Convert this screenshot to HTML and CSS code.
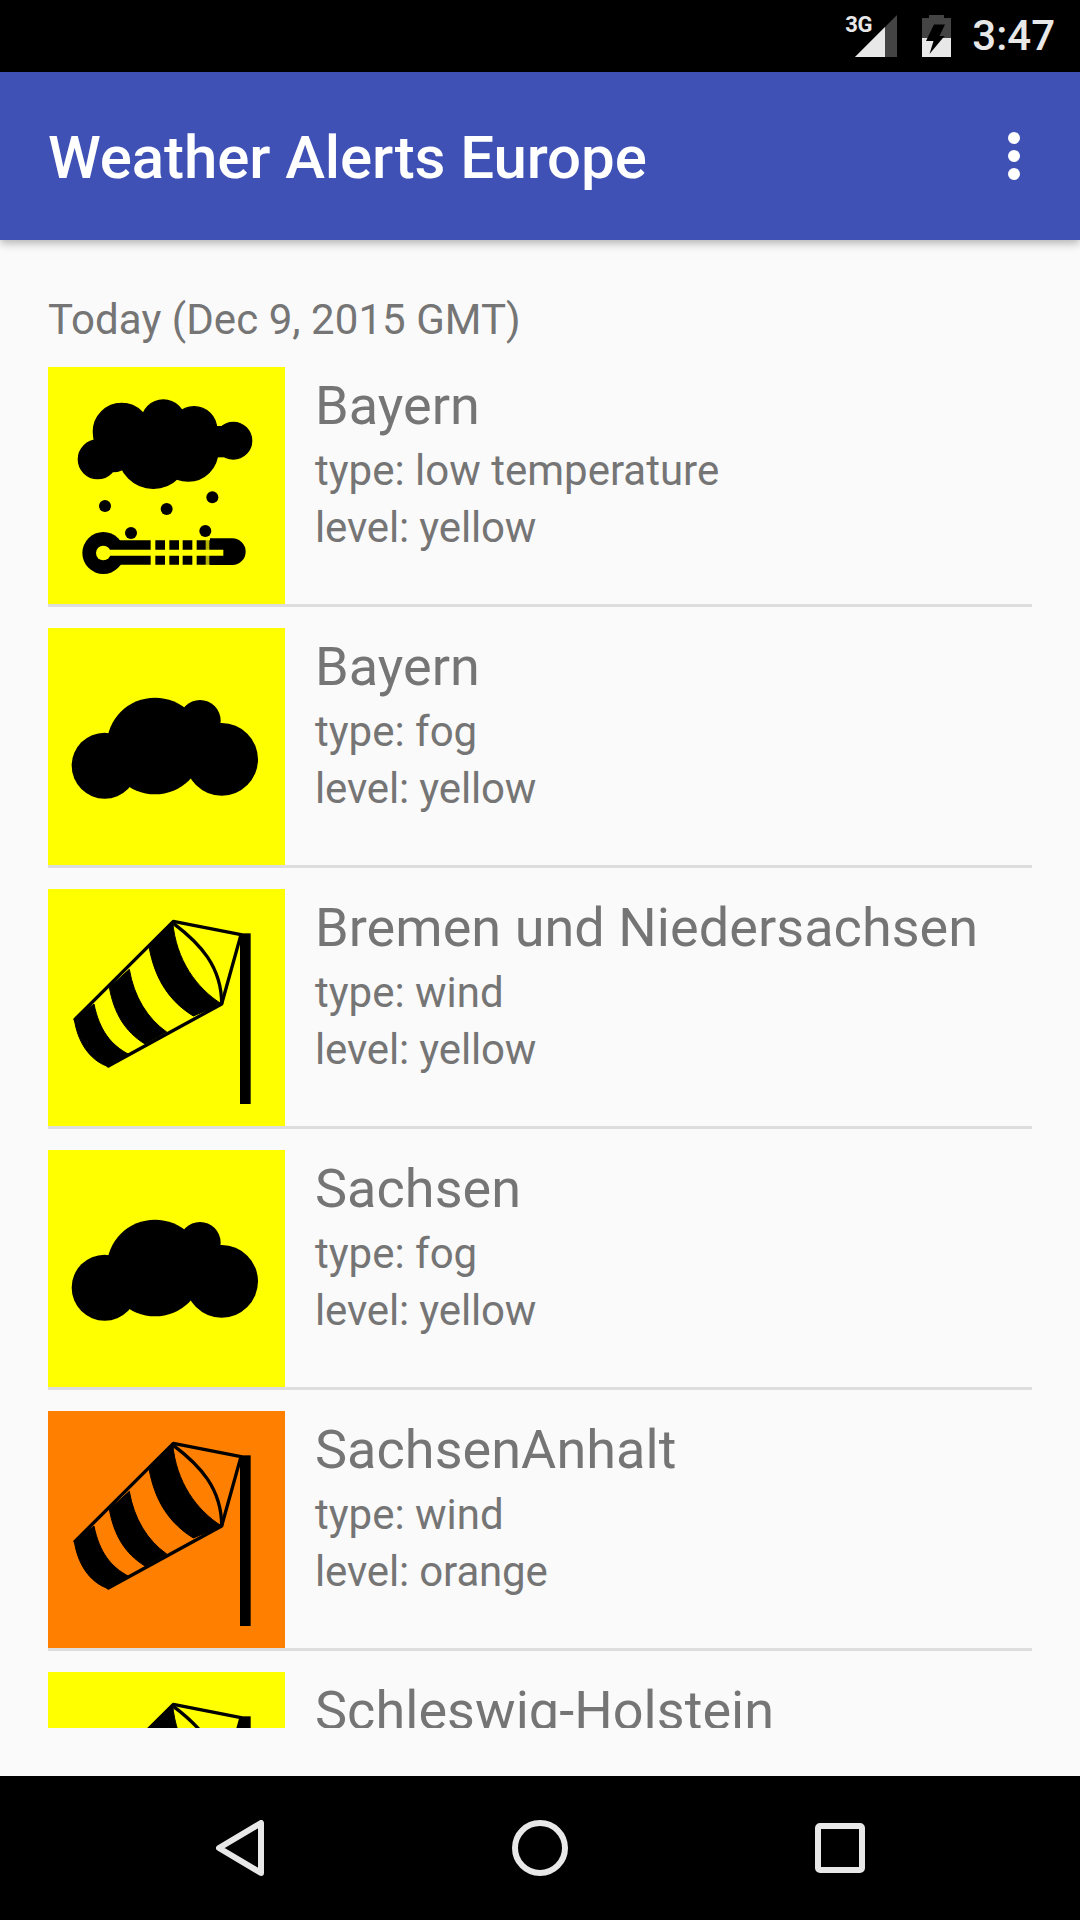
FILE: index.html
```html
<!DOCTYPE html>
<html lang="en">
<head>
<meta charset="utf-8">
<title>Weather Alerts Europe</title>
<link rel="stylesheet" href="styles.css">
</head>
<body>
<svg class="defs" width="0" height="0" aria-hidden="true">
  <symbol id="ic-cold" viewBox="144 21 711 711">
    <g fill="#000" stroke="#000" stroke-width="4">
      <circle cx="293" cy="298" r="58"/><circle cx="365" cy="215" r="85"/><circle cx="490" cy="185" r="65"/>
      <circle cx="582" cy="208" r="68"/><circle cx="700" cy="242" r="55"/><circle cx="460" cy="280" r="105"/>
      <circle cx="565" cy="275" r="88"/><circle cx="340" cy="275" r="60"/><rect x="600" y="200" width="100" height="90"/>
    </g>
    <g fill="#000">
      <circle cx="315" cy="438" r="18"/><circle cx="500" cy="447" r="18"/><circle cx="637" cy="412" r="18"/>
      <circle cx="393" cy="519" r="18"/><circle cx="616" cy="513" r="18"/>
      <circle cx="310" cy="579" r="63"/>
      <path d="M340 541H630V535H697a40 40 0 0 1 0 80H630V614H340Z"/>
    </g>
    <g fill="currentColor">
      <circle cx="310" cy="579" r="22"/>
      <path d="M320 569H670V587H320Z"/>
      <path d="M452 535h14v80h-14ZM495 535h13v80h-13ZM537 535h11v80h-11ZM577 535h13v80h-13Z"/>
    </g>
    <path d="M617 535h11v80h-11Z" fill="currentColor" opacity=".7"/>
  </symbol>
  <symbol id="ic-fog" viewBox="24 24 711 711">
    <g fill="#000">
      <circle cx="194" cy="437" r="99"/><circle cx="345" cy="378" r="145"/><circle cx="480" cy="302" r="62"/>
      <circle cx="545" cy="418" r="109"/>
    </g>
  </symbol>
  <symbol id="ic-wind" viewBox="24 27 711 711">
    <rect x="600" y="160" width="32" height="512" fill="#000"/>
    <g fill="none" stroke="#000" stroke-width="10" stroke-linejoin="round">
      <path d="M400 124 603 164 545 372 205 558 105 418Z"/>
      <path d="M400 130C480 190 545 260 545 372"/>
    </g>
    <g fill="#000" stroke="#000" stroke-width="3">
      <path d="M398 125 327 200C345 300 390 365 460 408L545 372C470 325 408 240 398 125Z"/>
      <path d="M268 268 208 322C222 400 255 455 315 492L380 456C322 415 282 350 268 268Z"/>
      <path d="M162 372 103 418C112 480 145 540 205 560L268 524C212 495 178 450 162 372Z"/>
    </g>
  </symbol>
</svg>
<div class="phone">
  <header class="status">
    <div class="signal">
      <span class="net">3G</span>
      <svg class="sig-icon" viewBox="0 0 42 42" width="42" height="42">
        <path d="M42 0V42H0Z" fill="#444"/>
        <path d="M30 12V42H0Z" fill="#e8e8e8"/>
      </svg>
    </div>
    <svg class="bat-icon" viewBox="0 0 29 42" width="29" height="42">
      <path d="M7 0H22V3H29V42H0V3H7Z" fill="#444"/>
      <path d="M0 23H29V42H0Z" fill="#e8e8e8"/>
      <path d="M12 9.500H23L17.500 21H22.500L7.500 39 11.500 26H4Z" fill="#000"/>
    </svg>
    <span class="clock">3:47</span>
  </header>
  <div class="appbar">
    <h1 class="title">Weather Alerts Europe</h1>
    <div class="overflow"><i></i><i></i><i></i></div>
  </div>
  <main class="content">
    <h2 class="day">Today (Dec 9, 2015 GMT)</h2>
    <ul class="list">
      <li class="row">
        <svg class="thumb yellow"><use href="#ic-cold"/></svg>
        <div class="info"><div class="name">Bayern</div><div class="meta">type: low temperature</div><div class="meta level">level: yellow</div></div>
      </li>
      <li class="row">
        <svg class="thumb yellow"><use href="#ic-fog"/></svg>
        <div class="info"><div class="name">Bayern</div><div class="meta">type: fog</div><div class="meta level">level: yellow</div></div>
      </li>
      <li class="row">
        <svg class="thumb yellow"><use href="#ic-wind"/></svg>
        <div class="info"><div class="name">Bremen und Niedersachsen</div><div class="meta">type: wind</div><div class="meta level">level: yellow</div></div>
      </li>
      <li class="row">
        <svg class="thumb yellow"><use href="#ic-fog"/></svg>
        <div class="info"><div class="name">Sachsen</div><div class="meta">type: fog</div><div class="meta level">level: yellow</div></div>
      </li>
      <li class="row">
        <svg class="thumb orange"><use href="#ic-wind"/></svg>
        <div class="info"><div class="name">SachsenAnhalt</div><div class="meta">type: wind</div><div class="meta level">level: orange</div></div>
      </li>
      <li class="row">
        <svg class="thumb yellow"><use href="#ic-wind"/></svg>
        <div class="info"><div class="name">Schleswig-Holstein</div><div class="meta">type: wind</div><div class="meta level">level: yellow</div></div>
      </li>
    </ul>
  </main>
  <nav class="navbar">
    <svg class="nav-back" viewBox="0 0 48 56" width="48" height="56"><path d="M45 3V53L3 28Z" fill="none" stroke="#e8e8e8" stroke-width="6" stroke-linejoin="round"/></svg>
    <svg class="nav-home" viewBox="0 0 56 56" width="56" height="56"><circle cx="28" cy="28" r="25" fill="none" stroke="#e8e8e8" stroke-width="6"/></svg>
    <svg class="nav-recent" viewBox="0 0 50 50" width="50" height="50"><rect x="3" y="3" width="44" height="44" rx="2" fill="none" stroke="#e8e8e8" stroke-width="6"/></svg>
  </nav>
</div>
</body>
</html>
```
FILE: styles.css
```css
* { box-sizing: border-box; }
html, body { margin: 0; padding: 0; }
body { width: 1080px; height: 1920px; overflow: hidden; font-family: Roboto, "Noto Sans", sans-serif; background: #fafafa; }
.defs { display: block; width: 0; height: 0; }
.phone { width: 1080px; height: 1920px; display: flex; flex-direction: column; }
.status { height: 72px; flex: none; background: #000; display: flex; align-items: center; padding-right: 25px; color: #e8e8e8; }
.signal { margin-left: auto; display: flex; align-items: flex-start; position: relative; width: 52px; justify-content: flex-end; }
.net { position: absolute; left: 0; top: -2px; font-size: 22px; font-weight: 700; letter-spacing: -.5px; line-height: 24px; }
.sig-icon { display: block; }
.bat-icon { display: block; margin-left: 25px; }
.clock { font-size: 42px; font-weight: 500; margin-left: 21px; line-height: 1; }
.appbar { height: 168px; flex: none; background: #3f51b5; display: flex; align-items: center; padding: 2px 48px 0; position: relative; box-shadow: 0 3px 9px rgba(0,0,0,.3); z-index: 1; }
.title { margin: 0; font-size: 60px; font-weight: 500; letter-spacing: -.1px; color: #fff; flex: 1; }
.overflow { display: flex; flex-direction: column; gap: 6px; margin-right: 12px; margin-top: -2px; }
.overflow i { display: block; width: 12px; height: 12px; border-radius: 50%; background: #fff; }
.content { flex: 1; min-height: 0; padding: 55px 48px 48px; display: flex; flex-direction: column; }
.day { margin: 0; font-size: 42px; font-weight: 400; letter-spacing: .05px; color: #757575; line-height: 50px; height: 72px; }
.list { list-style: none; margin: 0; padding: 0; flex: 1; min-height: 0; overflow: hidden; }
.row { display: flex; height: 240px; margin-bottom: 21px; border-bottom: 3px solid #dddddd; }
.thumb { width: 237px; height: 237px; flex: none; display: block; }
.yellow { background: #ffff00; color: #ffff00; }
.orange { background: #ff8000; color: #ff8000; }
.info { margin-left: 30px; min-width: 0; color: #757575; }
.name { font-size: 54px; letter-spacing: .05px; line-height: 63px; padding-top: 7px; margin-bottom: 5px; }
.meta { font-size: 42px; line-height: 57px; }
.level { letter-spacing: -.15px; }
.navbar { height: 144px; flex: none; background: #000; position: relative; display: grid; grid-template-columns: repeat(3, 1fr); }
.nav-back, .nav-home, .nav-recent { position: absolute; top: 44px; }
.nav-back { left: 216px; }
.nav-home { left: 512px; }
.nav-recent { left: 815px; top: 47px; }
```
